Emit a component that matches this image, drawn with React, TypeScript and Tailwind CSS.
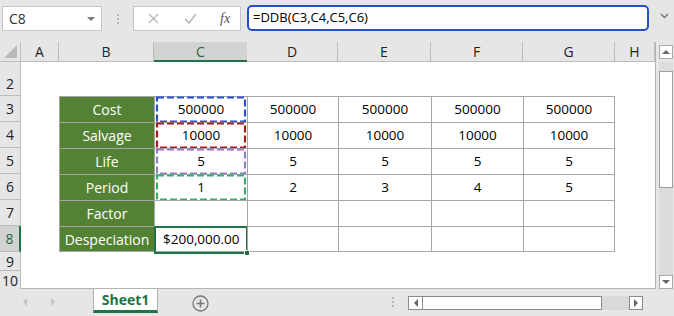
import React from 'react';

const cols = ['A', 'B', 'C', 'D', 'E', 'F', 'G', 'H'];

const labels = ['Cost', 'Salvage', 'Life', 'Period', 'Factor', 'Despeciation'];
const values = [
    ['500000', '500000', '500000', '500000', '500000'],
    ['10000', '10000', '10000', '10000', '10000'],
    ['5', '5', '5', '5', '5'],
    ['1', '2', '3', '4', '5'],
    ['', '', '', '', ''],
    ['$200,000.00', '', '', '', ''],
];
// marching-ants colours for C3..C6
const dashColors = ['#2a4fcb', '#a51d1d', '#8f80c0', '#35b06c'];

function Dashed({ color }: { color: string }) {
    return (
        <svg className="absolute -left-px -top-px pointer-events-none" width="94" height="27">
            <rect x="3" y="1.5" width="88" height="24" fill="none" stroke={color} strokeWidth="2.2" strokeDasharray="7 3" />
        </svg>
    );
}

function Tri({ dir, color = '#666' }: { dir: 'up' | 'down' | 'left' | 'right'; color?: string }) {
    const pts = {
        up: '0,5 4,1 8,5',
        down: '0,1 4,5 8,1',
        left: '5,0 1,4 5,8',
        right: '1,0 5,4 1,8',
    }[dir];
    const w = dir === 'up' || dir === 'down' ? 8 : 6;
    const h = dir === 'up' || dir === 'down' ? 6 : 8;
    return (
        <svg width={w} height={h}>
            <polygon points={pts} fill={color} />
        </svg>
    );
}

function Dots() {
    return (
        <div className="flex flex-col gap-[2px]">
            <div className="w-[2px] h-[2px] bg-[#b5b5b5]" />
            <div className="w-[2px] h-[2px] bg-[#b5b5b5]" />
            <div className="w-[2px] h-[2px] bg-[#b5b5b5]" />
        </div>
    );
}

export default function App() {
    return (
        <div className="w-[674px] h-[316px] bg-[#e6e6e6] flex flex-col overflow-hidden text-[13px] text-[#222]" style={{ fontFamily: '"Open Sans", "Liberation Sans", sans-serif' }}>
            {/* formula bar */}
            <div className="h-[42px] flex items-start pt-[6px] shrink-0">
                <div className="ml-[2px] w-[100px] h-[25px] bg-white border border-[#c6c6c6] flex items-center justify-between pl-[6px] pr-[6px]">
                    <span className="text-[14px] text-[#333]">C8</span>
                    <Tri dir="down" color="#777" />
                </div>
                <div className="w-[31px] h-[25px] flex items-center justify-center">
                    <Dots />
                </div>
                <div className="w-[108px] h-[25px] bg-white border border-[#c6c6c6] flex items-center">
                    <svg className="ml-[14px]" width="11" height="11" viewBox="0 0 11 11">
                        <path d="M1 1 L10 10 M10 1 L1 10" stroke="#b8b8b8" strokeWidth="1.4" />
                    </svg>
                    <svg className="ml-[25px]" width="13" height="11" viewBox="0 0 13 11">
                        <path d="M1 6 L5 10 L12 1" stroke="#b8b8b8" strokeWidth="1.6" fill="none" />
                    </svg>
                    <span className="ml-[23px] text-[14px] italic text-[#555]" style={{ fontFamily: '"Liberation Serif", serif' }}>fx</span>
                </div>
                <div className="ml-[6px] -mt-px w-[402px] h-[26px] bg-white border-2 border-[#2350c4] rounded-[5px] flex items-center pl-[4px]">
                    <span className="text-[13px] text-black">=DDB(C3,C4,C5,C6)</span>
                </div>
                <div className="ml-[11px] mt-[7px]">
                    <svg width="9" height="6" viewBox="0 0 9 6">
                        <path d="M1 1 L4.5 4.5 L8 1" stroke="#777" strokeWidth="1.5" fill="none" />
                    </svg>
                </div>
            </div>

            {/* sheet + vertical scroll */}
            <div className="flex h-[247px] shrink-0">
                <div className="w-[656px] bg-white border-r border-b border-[#b4b4b4] grid grid-cols-[21px_38px_95px_93px_91px_93px_92px_92px_40px] grid-rows-[20px_34px_26px_26px_26px_26px_26px_26px_19px_18px]">
                    {/* select all */}
                    <div className="bg-[#e6e6e6] border-r border-b border-[#bdbdbd] flex items-end justify-end pr-[3px] pb-[3px]">
                        <svg width="13" height="13" viewBox="0 0 13 13">
                            <polygon points="0,13 13,13 13,0" fill="#b8b8b8" />
                        </svg>
                    </div>
                    {cols.map((c) => (
                        <div
                            key={c}
                            className={
                                c === 'C'
                                    ? 'bg-[#d2d2d2] border-b-2 border-[#217346] flex items-center justify-center text-[14px] text-[#1e6b42]'
                                    : 'bg-[#e6e6e6] border-r border-b border-[#bdbdbd] flex items-center justify-center text-[14px]'
                            }
                        >
                            {c}
                        </div>
                    ))}

                    {/* row 2 */}
                    <div className="row-start-2 col-start-1 bg-[#e6e6e6] border-r border-b border-[#bdbdbd] flex items-end justify-center pb-[1px] text-[14px]">2</div>

                    {/* rows 3..8 headers */}
                    {[3, 4, 5, 6, 7, 8].map((r, i) => (
                        <div
                            key={r}
                            className={
                                r === 8
                                    ? 'col-start-1 bg-[#d2d2d2] border-r-2 border-r-[#217346] border-b border-b-[#bdbdbd] flex items-center justify-center text-[14px] text-[#1e6b42]'
                                    : 'col-start-1 bg-[#e6e6e6] border-r border-b border-[#bdbdbd] flex items-center justify-center text-[14px]'
                            }
                            style={{ gridRowStart: i + 3 }}
                        >
                            {r}
                        </div>
                    ))}

                    {/* the table B3:G8 */}
                    <div className="col-start-3 col-span-6 row-start-3 row-span-6 border-r border-b border-[#a6a6a6] grid grid-cols-[95px_93px_91px_93px_92px_91px] grid-rows-[26px_26px_26px_26px_26px_25px]">
                        {labels.map((label, r) => (
                            <React.Fragment key={label}>
                                <div className="bg-[#548235] text-white border-l border-t border-[#a6a6a6] flex items-center justify-center text-[14px]">
                                    {label}
                                </div>
                                {values[r].map((v, c) => (
                                    <div
                                        key={c}
                                        className={
                                            'relative border-l border-t border-[#a6a6a6] flex items-center text-black text-[13.5px] ' +
                                            (r === 5 && c === 0 ? 'justify-start pl-[8px]' : 'justify-center')
                                        }
                                    >
                                        {v}
                                        {c === 0 && r < 4 && <Dashed color={dashColors[r]} />}
                                        {c === 0 && r === 5 && (
                                            <>
                                                <div className="absolute -left-px -top-px w-[94px] h-[28px] border-2 border-[#217346] pointer-events-none" />
                                                <div className="absolute left-[89px] top-[23px] w-[6px] h-[6px] bg-[#217346] border border-white" />
                                            </>
                                        )}
                                    </div>
                                ))}
                            </React.Fragment>
                        ))}
                    </div>

                    <div className="row-start-9 col-start-1 bg-[#e6e6e6] border-r border-b border-[#bdbdbd] flex items-center justify-center text-[14px]">9</div>
                    <div className="row-start-10 col-start-1 bg-[#e6e6e6] border-r border-[#bdbdbd] flex items-center justify-center text-[14px]">10</div>
                </div>

                {/* vertical scrollbar */}
                <div className="w-[18px] flex flex-col pl-[3px] pr-px">
                    <div className="mt-[3px] h-[14px] bg-white border border-[#ababab] flex items-center justify-center">
                        <Tri dir="up" color="#666" />
                    </div>
                    <div className="mt-[3px] flex-1 bg-[#dcdcdc] flex flex-col">
                        <div className="mt-[9px] h-[117px] bg-white border border-[#a0a0a0]" />
                    </div>
                    <div className="h-[14px] bg-white border border-[#ababab] flex items-center justify-center">
                        <Tri dir="down" color="#666" />
                    </div>
                </div>
            </div>

            {/* sheet tabs */}
            <div className="h-[27px] flex items-start shrink-0">
                <div className="ml-[22px] mt-[9px]">
                    <Tri dir="left" color="#c4c4c4" />
                </div>
                <div className="ml-[22px] mt-[9px]">
                    <Tri dir="right" color="#c4c4c4" />
                </div>
                <div className="ml-[37px] w-[65px] h-[24px] bg-white border-l border-r border-[#b0b0b0] border-b-[3px] border-b-[#217346] flex items-center justify-center">
                    <span className="font-bold text-[14px] text-[#217346]">Sheet1</span>
                </div>
                <div className="ml-[34px] mt-[6px]">
                    <svg width="17" height="17" viewBox="0 0 17 17">
                        <circle cx="8.5" cy="8.5" r="7.5" fill="none" stroke="#777" strokeWidth="1.3" />
                        <path d="M8.5 4.5 V12.5 M4.5 8.5 H12.5" stroke="#777" strokeWidth="1.6" />
                    </svg>
                </div>
                <div className="ml-[183px] mt-[8px]">
                    <Dots />
                </div>
                <div className="ml-[14px] mt-[7px] w-[235px] h-[14px] flex">
                    <div className="w-[15px] h-[14px] bg-white border border-[#8a8a8a] flex items-center justify-center">
                        <Tri dir="left" color="#666" />
                    </div>
                    <div className="w-[179px] h-[14px] bg-white border border-[#8a8a8a] border-l-0" />
                    <div className="w-[27px] h-[14px] bg-[#d9d9d9]" />
                    <div className="w-[14px] h-[14px] bg-white border border-[#8a8a8a] flex items-center justify-center">
                        <Tri dir="right" color="#666" />
                    </div>
                </div>
            </div>
        </div>
    );
}
